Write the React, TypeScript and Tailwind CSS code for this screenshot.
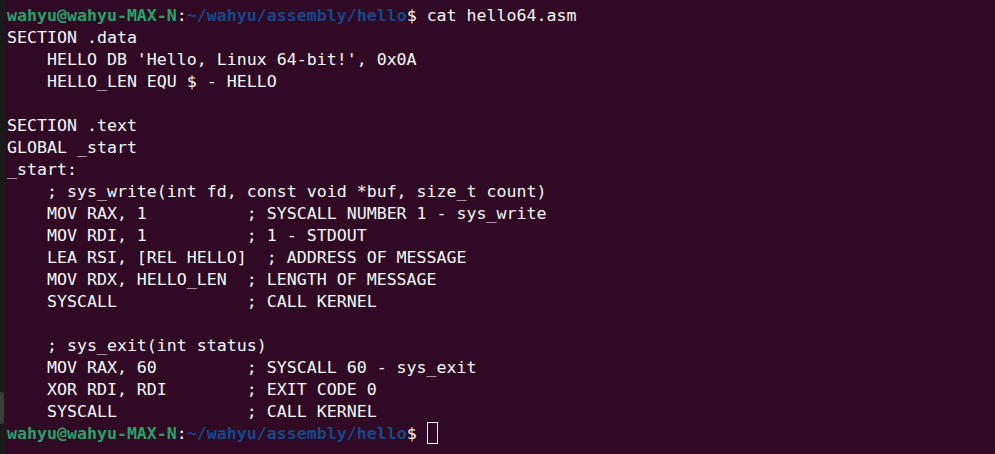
const Prompt = ({ cmd }: { cmd?: string }) => (
  <div className="flex">
    <span className="font-bold text-[#26a269]">wahyu@wahyu-MAX-N</span>
    <span>:</span>
    <span className="font-bold text-[#12488b]">~/wahyu/assembly/hello</span>
    <span>$ </span>
    {cmd ? (
      <span>{cmd}</span>
    ) : (
      <span className="-mt-[1px] h-[22px] w-[11px] border-[1.5px] border-[#f2f2f2]" />
    )}
  </div>
);

const lines = [
  "SECTION .data",
  "    HELLO DB 'Hello, Linux 64-bit!', 0x0A",
  "    HELLO_LEN EQU $ - HELLO",
  "",
  "SECTION .text",
  "GLOBAL _start",
  "_start:",
  "    ; sys_write(int fd, const void *buf, size_t count)",
  "    MOV RAX, 1          ; SYSCALL NUMBER 1 - sys_write",
  "    MOV RDI, 1          ; 1 - STDOUT",
  "    LEA RSI, [REL HELLO]  ; ADDRESS OF MESSAGE",
  "    MOV RDX, HELLO_LEN  ; LENGTH OF MESSAGE",
  "    SYSCALL             ; CALL KERNEL",
  "",
  "    ; sys_exit(int status)",
  "    MOV RAX, 60         ; SYSCALL 60 - sys_exit",
  "    XOR RDI, RDI        ; EXIT CODE 0",
  "    SYSCALL             ; CALL KERNEL",
];

export default function App() {
  return (
    <div className="flex w-[995px] h-[454px] overflow-hidden">
      {/* neighbouring window edge */}
      <div className="w-[6px] shrink-0 bg-[#1a1a1a] flex flex-col">
        <div className="h-[392px]" />
        <div className="h-[32px] w-[4px] rounded-r-[3px] bg-[#3c3c3c]" />
      </div>
      {/* terminal */}
      <div className="flex-1 bg-[#300a24] pl-[1px] pt-[5px] text-[#f7f7f7] text-[16.6px] leading-[22px] whitespace-pre font-['DejaVu_Sans_Mono',monospace]">
        <Prompt cmd="cat hello64.asm" />
        {lines.map((l, i) => (
          <div key={i} className="h-[22px]">
            {l}
          </div>
        ))}
        <Prompt />
      </div>
    </div>
  );
}
